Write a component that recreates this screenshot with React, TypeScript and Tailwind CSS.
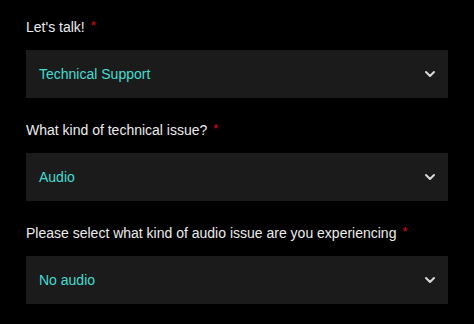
import React from "react";

const fields = [
  { label: "Let's talk!", value: "Technical Support" },
  { label: "What kind of technical issue?", value: "Audio" },
  {
    label: "Please select what kind of audio issue are you experiencing",
    value: "No audio",
  },
];

const Chevron: React.FC = () => (
  <svg width="12" height="8" viewBox="0 0 12 8" fill="none">
    <path
      d="M2 2 L6 6 L10 2"
      stroke="#d9d9d9"
      strokeWidth="2"
      strokeLinecap="round"
      strokeLinejoin="round"
    />
  </svg>
);

const App: React.FC = () => {
  return (
    <div
      className="w-[474px] h-[324px] bg-black px-[26px] pt-[17px] overflow-hidden"
      style={{ fontFamily: '"Liberation Sans", Arial, sans-serif' }}
    >
      {fields.map((field) => (
        <div key={field.label} className="mb-[22px]">
          <div className="flex items-center h-5 mb-[13px] text-[14px] text-[#ececec]">
            <span>{field.label}</span>
            <span className="ml-[6px] text-[#e0061e] text-[13px] leading-none relative top-[-2px]">
              *
            </span>
          </div>
          <div className="flex items-center justify-between h-[48px] bg-[#1b1b1b] pl-[13px] pr-[12px]">
            <span className="text-[14px] text-[#41ddd2]">{field.value}</span>
            <Chevron />
          </div>
        </div>
      ))}
    </div>
  );
};

export default App;
